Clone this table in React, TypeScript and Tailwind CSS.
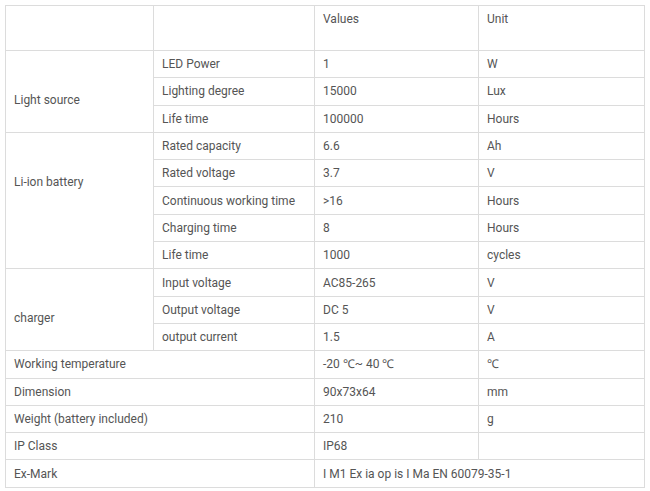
const groups = [
  {
    name: 'Light source',
    rows: [
      ['LED Power', '1', 'W'],
      ['Lighting degree', '15000', 'Lux'],
      ['Life time', '100000', 'Hours'],
    ],
  },
  {
    name: 'Li-ion battery',
    rows: [
      ['Rated capacity', '6.6', 'Ah'],
      ['Rated voltage', '3.7', 'V'],
      ['Continuous working time', '>16', 'Hours'],
      ['Charging time', '8', 'Hours'],
      ['Life time', '1000', 'cycles'],
    ],
  },
  {
    name: 'charger',
    rows: [
      ['Input voltage', 'AC85-265', 'V'],
      ['Output voltage', 'DC 5', 'V'],
      ['output current', '1.5', 'A'],
    ],
  },
];

const singles = [
  ['Working temperature', '-20 ℃~ 40 ℃', '℃'],
  ['Dimension', '90x73x64', 'mm'],
  ['Weight (battery included)', '210', 'g'],
  ['IP Class', 'IP68', ''],
];

const cell = 'border border-[#dcdcdc] px-[8px] py-0 h-[27.3px] leading-[18px] align-middle text-left font-normal';

export default function App() {
  return (
    <div className="bg-white w-[650px] h-[491px] pt-[5px] pl-[5px] font-['Roboto',sans-serif] text-[12px] text-[#555]">
      <table className="border-collapse table-fixed w-[639px]">
        <colgroup>
          <col className="w-[148px]" />
          <col className="w-[161px]" />
          <col className="w-[164px]" />
          <col className="w-[166px]" />
        </colgroup>
        <thead>
          <tr>
            <th className="border border-[#dcdcdc] h-[45px]" />
            <th className="border border-[#dcdcdc]" />
            <th className="border border-[#dcdcdc] px-[8px] pt-[4px] align-top text-left font-normal leading-[18px]">Values</th>
            <th className="border border-[#dcdcdc] px-[8px] pt-[4px] align-top text-left font-normal leading-[18px]">Unit</th>
          </tr>
        </thead>
        <tbody>
          {groups.map((g) =>
            g.rows.map((r, i) => (
              <tr key={g.name + r[0]}>
                {i === 0 && (
                  <td
                    rowSpan={g.rows.length}
                    className="border border-[#dcdcdc] px-[8px] pt-[40px] leading-[18px] align-top text-left"
                  >
                    {g.name}
                  </td>
                )}
                <td className={cell}>{r[0]}</td>
                <td className={cell}>{r[1]}</td>
                <td className={cell}>{r[2]}</td>
              </tr>
            ))
          )}
          {singles.map((r) => (
            <tr key={r[0]}>
              <td colSpan={2} className={cell}>{r[0]}</td>
              <td className={cell}>{r[1]}</td>
              <td className={cell}>{r[2]}</td>
            </tr>
          ))}
          <tr>
            <td colSpan={2} className={cell}>Ex-Mark</td>
            <td colSpan={2} className={cell}>I M1 Ex ia op is I Ma EN 60079-35-1</td>
          </tr>
        </tbody>
      </table>
    </div>
  );
}
